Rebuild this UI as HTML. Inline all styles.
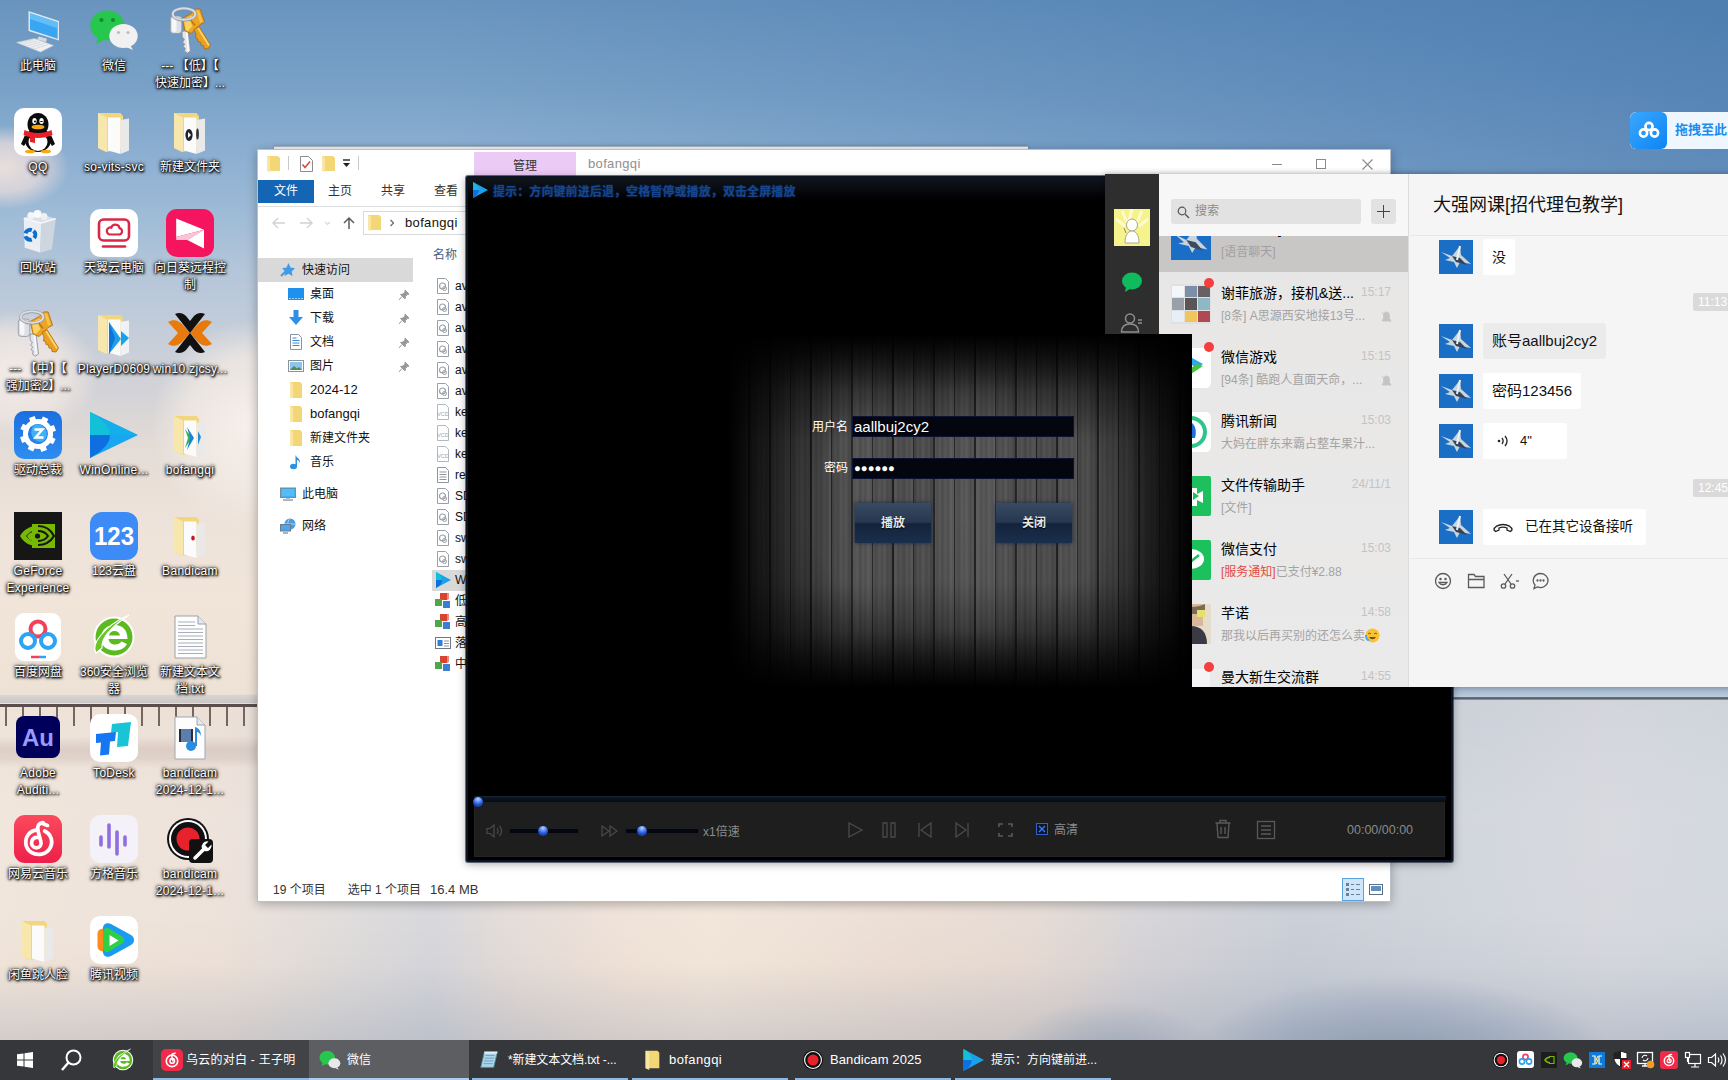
<!DOCTYPE html>
<html lang="zh-CN">
<head>
<meta charset="utf-8">
<title>桌面</title>
<style>
*{box-sizing:border-box;margin:0;padding:0}
html,body{width:1728px;height:1080px;overflow:hidden}
body{position:relative;font-family:"Liberation Sans","Noto Sans CJK SC",sans-serif;font-size:12px;color:#000;background:#e6dad3}
.abs{position:absolute}
/* ---------- wallpaper ---------- */
#wall{position:absolute;left:0;top:0;width:1728px;height:1080px;overflow:hidden;
background:linear-gradient(180deg,#6894be 0px,#7aa2c8 90px,#8baed1 150px,#9dbad6 210px,#b2c5d9 265px,#c4cdd9 330px,#d5d4d7 400px,#e4dcd6 450px,#ede2d9 510px,#f1e5da 600px,#eee2d7 694px)}
#wall div{position:absolute}
#wall .skyR{left:0;top:0;width:1728px;height:260px;background:linear-gradient(90deg,rgba(56,108,165,0) 0%,rgba(56,108,165,0) 25%,rgba(56,108,165,.55) 100%)}
#wall .c1{left:-60px;top:125px;width:130px;height:85px;background:radial-gradient(ellipse at 50% 50%,rgba(238,224,220,.95) 0,rgba(232,220,220,.75) 40%,rgba(230,220,222,0) 70%)}
#wall .c2{left:-70px;top:310px;width:170px;height:130px;background:radial-gradient(ellipse at 50% 50%,rgba(244,236,231,.97) 0,rgba(240,231,226,.75) 45%,rgba(238,229,224,0) 70%)}
#wall .c3{left:150px;top:320px;width:200px;height:210px;background:radial-gradient(ellipse at 50% 50%,rgba(247,240,235,.97) 0,rgba(242,234,228,.75) 45%,rgba(240,232,226,0) 70%)}
#wall .water{left:0;top:694px;width:1728px;height:386px;background:linear-gradient(90deg,#efe3d8 0%,#ebdfd6 13%,#dedad8 19%,#d4d4d9 25%,#e3dad5 30%,#eee0d5 36%,#f1e4d8 41%,#eadcd2 52%,#e4d8d1 60%,#d3d1d5 66%,#c6cbd4 75%,#cdd1d9 86%,#d3d5db 93%,#cfd4db 100%)}
#wall .waterv{left:0;top:694px;width:1728px;height:386px;background:linear-gradient(180deg,rgba(150,165,185,.0) 0,rgba(255,255,255,.12) 120px,rgba(255,255,255,.1) 220px,rgba(120,135,160,.0) 270px,rgba(110,128,155,.22) 346px)}
#wall .blob{left:1180px;top:975px;width:440px;height:120px;background:radial-gradient(ellipse at 50% 75%,rgba(110,130,160,.6) 0,rgba(125,143,170,.32) 45%,rgba(130,148,172,0) 70%)}
#wall .blob2{left:1000px;top:1000px;width:220px;height:80px;background:radial-gradient(ellipse at 50% 70%,rgba(120,138,165,.45) 0,rgba(130,148,172,.2) 45%,rgba(130,148,172,0) 70%)}
#wall .rail{left:0;top:695px;width:258px;height:8px;background:linear-gradient(180deg,#d9d5d4 0,#cbc6c6 100%)}
#wall .deck{left:0;top:704px;width:258px;height:3px;background:#5a4d4b}
#wall .pier{left:5px;top:707px;width:253px;height:19px;background:repeating-linear-gradient(90deg,rgba(96,80,74,.85) 0 2px,rgba(0,0,0,0) 2px 17px)}
#wall .refl{left:0;top:736px;width:258px;height:32px;background:linear-gradient(180deg,rgba(190,172,166,0),rgba(190,172,166,.38) 40%,rgba(190,172,166,.3) 70%,rgba(190,172,166,0))}
#wall .horb{left:1453px;top:687px;width:275px;height:11px;background:linear-gradient(180deg,#9fb6cf,#b4c5d7 70%,#c3cdd9)}
#wall .hor{left:1453px;top:697px;width:275px;height:3px;background:linear-gradient(180deg,#66758a,#55626f 50%,#9aa7b6)}
/* ---------- desktop icons ---------- */
.ico{position:absolute;width:76px;text-align:center;color:#fff;font-size:12px;line-height:17px}
.ico .g{position:absolute;left:14px;top:0;width:48px;height:48px}
.ico .t{position:absolute;left:-6px;width:88px;top:51px;text-shadow:0 1px 3px #000,0 0 4px rgba(0,0,0,.95),1px 1px 2px #000,0 0 2px rgba(0,0,0,.8)}
/* ---------- taskbar ---------- */
#tb{position:absolute;left:0;top:1040px;width:1728px;height:40px;background:#35373b;color:#fff;font-size:13px}
</style>
</head>
<body>
<div id="wall"><div class="skyR"></div><div class="c1"></div><div class="c2"></div><div class="c3"></div><div class="water"></div><div class="waterv"></div><div class="blob"></div><div class="blob2"></div><div class="refl"></div><div class="rail"></div><div class="deck"></div><div class="pier"></div><div class="horb"></div><div class="hor"></div></div>

<div id="icons">
<div class="ico" style="left:0px;top:7px"><svg class="g" viewBox="0 0 48 48" ><path d="M14.5 4l30.5 10v19.5L14.5 24z" fill="#dfe6ee"/><path d="M16 6.2l27.6 9v16.5L16 22.8z" fill="#39a6f2"/><path d="M16 6.2l27.6 9v6L16 12z" fill="#62bdf8"/><path d="M25 29.5l8 2.2-1 3.3-9-2.6z" fill="#d7dbe0"/><path d="M2.5 35.5l18-4 19 7-13 6.5z" fill="#eef0f3" stroke="#c3c8cf" stroke-width=".6"/><path d="M6 35.8l14.5-3.2M9 37.2l14-3.3M12.5 38.8l14-3.6M16 40.4l14-3.8M20 42l13.5-4.2" stroke="#cdd2d8" stroke-width=".7"/></svg><div class="t">此电脑</div></div>
<div class="ico" style="left:76px;top:7px"><svg class="g" viewBox="0 0 48 48" ><ellipse cx="17.3" cy="18.5" rx="17" ry="15" fill="#27c64d"/><path d="M8 30l-2 7 8-4z" fill="#27c64d"/><circle cx="11.5" cy="13" r="2" fill="#128a2e"/><circle cx="23" cy="13" r="2" fill="#128a2e"/><ellipse cx="33.5" cy="29" rx="14.2" ry="12" fill="#f1f1f1"/><path d="M40 38l3 5-7-3z" fill="#f1f1f1"/><circle cx="28.5" cy="25.5" r="1.6" fill="#bdbdbd"/><circle cx="38" cy="25.5" r="1.6" fill="#bdbdbd"/></svg><div class="t">微信</div></div>
<div class="ico" style="left:152px;top:7px"><svg class="g" viewBox="0 0 48 48" ><g><rect x="4.300" y="9" width="11.500" height="17.500" rx="3.200" fill="#dcdfe5" stroke="#8f949d" stroke-width=".800"/><rect x="6" y="10.500" width="4.500" height="14.500" rx="2" fill="#f6f7f9"/><path d="M16 24.500l6-1.500 2.500 21-3 2.200-3-2 .700-3-2.200-1.500 1.700-2.500-2-2 1.700-3-2.200-2z" fill="#e3e5ea" stroke="#878c96" stroke-width=".800"/><path d="M20.500 24l1.700 20" stroke="#fafbfc" stroke-width="1.600"/><path d="M16.200 11.500l9-5 4.500-4.600h4.400l4.500 13.300-4.500 2.300-9 9-6-2.400z" fill="#eda427" stroke="#a9690f" stroke-width=".800"/><path d="M18 12.500l7.500-4 2 4-3 2.500 2 4-4.500 5-2.500-1z" fill="#fbd35f"/><path d="M30.500 3.500h2.500l3.800 11.200-2.800 1.400z" fill="#f9c347"/><path d="M28 22.500l5-3 11.500 18.500-2.500 4-4-.500-.500-3-2.500-.500-.500-3-2.500-.500-.500-3-2-.500.500-4z" fill="#e99f22" stroke="#a9690f" stroke-width=".800"/><path d="M32 21l11 17.500" stroke="#fbd466" stroke-width="1.800"/><path d="M24 12l5 6.500" stroke="#b97a16" stroke-width="1.600"/><ellipse cx="18" cy="7.200" rx="11.300" ry="5.800" fill="none" stroke="#8d93a0" stroke-width="3"/><ellipse cx="18" cy="7" rx="11.300" ry="5.800" fill="none" stroke="#d9dce3" stroke-width="2"/></g></svg><div class="t">--- 【低】【<br>快速加密】...</div></div>
<div class="ico" style="left:0px;top:108px"><svg class="g" viewBox="0 0 48 48" ><rect x="0" y="0" width="48" height="48" rx="10" fill="#fff"/><ellipse cx="24" cy="16.5" rx="10.5" ry="11.5" fill="#0b0b0b"/><ellipse cx="24" cy="32" rx="13" ry="12" fill="#0b0b0b"/><path d="M11 27l-4 9 3 2 4-6zM37 27l4 9-3 2-4-6z" fill="#0b0b0b"/><ellipse cx="24" cy="34" rx="9.5" ry="9" fill="#fff"/><ellipse cx="20.5" cy="13" rx="2.2" ry="3" fill="#fff"/><ellipse cx="27.5" cy="13" rx="2.2" ry="3" fill="#fff"/><circle cx="21" cy="13.5" r="1" fill="#000"/><path d="M26.3 13.5h2.4" stroke="#000" stroke-width="1"/><ellipse cx="24" cy="19" rx="6.5" ry="2.3" fill="#f7a70f"/><path d="M10.5 22c8 4 19 4 27 0l1 5c-8 4-21 4-29 0z" fill="#e8202a"/><path d="M16 27h5v8l-5-1z" fill="#e8202a"/><ellipse cx="16" cy="43.5" rx="5" ry="1.8" fill="#f7a70f"/><ellipse cx="32" cy="43.5" rx="5" ry="1.8" fill="#f7a70f"/></svg><div class="t" style="letter-spacing:.3px">QQ</div></div>
<div class="ico" style="left:76px;top:108px"><svg class="g" viewBox="0 0 48 48" ><path d="M8 5h22.5l2.5 3v33l-17 3-8-4z" fill="#f1d67e"/><path d="M8 5l9 4.5v34.5l-9-4z" fill="#f8e7ad"/><path d="M18 9.5h12.5v36.5l-12.5-3.5z" fill="#fbfbfb"/><path d="M30.5 12l8.5-1.5v32l-8.5 3.5z" fill="#e9e9ea"/></svg><div class="t" style="letter-spacing:.3px">so-vits-svc</div></div>
<div class="ico" style="left:152px;top:108px"><svg class="g" viewBox="0 0 48 48" ><path d="M8 5h22.5l2.5 3v33l-17 3-8-4z" fill="#f1d67e"/><path d="M8 5l9 4.5v34.5l-9-4z" fill="#f8e7ad"/><path d="M18 9.5h12.5v36.5l-12.5-3.5z" fill="#fbfbfb"/><path d="M30.5 12l8.5-1.5v32l-8.5 3.5z" fill="#e9e9ea"/><ellipse cx="23" cy="27" rx="3.6" ry="6" fill="#22222c"/><path d="M22 24l3 3-3 3z" fill="#fff"/><ellipse cx="31.5" cy="26" rx="1.4" ry="5.5" fill="#33333c"/></svg><div class="t">新建文件夹</div></div>
<div class="ico" style="left:0px;top:209px"><svg class="g" viewBox="0 0 48 48" ><path d="M9.800 9.100L22.900 4.100L41.800 9.700L27.300 14.100z" fill="#dfe3e8" opacity=".9"/><circle cx="17" cy="6.500" r="3.600" fill="#f4f5f7"/><circle cx="23.500" cy="5" r="4" fill="#fafafb"/><circle cx="30" cy="7.500" r="3.400" fill="#eef0f3"/><path d="M9.800 9.100L27.300 14.100L26.200 44.100L10.700 39.100z" fill="#f0f2f5" opacity=".92"/><path d="M27.300 14.100L41.800 9.700L37.900 40.800L26.200 44.100z" fill="#d3d8df" opacity=".88"/><path d="M9.800 9.100L27.300 14.100L41.800 9.700" fill="none" stroke="#fbfbfc" stroke-width="1.400"/><path d="M10.700 39.100L26.200 44.100L37.900 40.800" fill="none" stroke="#b9bec6" stroke-width=".800"/><circle cx="16.300" cy="25.800" r="5" fill="none" stroke="#0b6fd2" stroke-width="4" stroke-dasharray="7.700 2.770" transform="rotate(-50 16.300 25.800)"/></svg><div class="t">回收站</div></div>
<div class="ico" style="left:76px;top:209px"><svg class="g" viewBox="0 0 48 48" ><rect width="48" height="48" rx="10" fill="#fff"/><rect x="9" y="10.5" width="30" height="21" rx="4.5" fill="none" stroke="#dc2647" stroke-width="2.6"/><path d="M13 37.5h22" stroke="#dc2647" stroke-width="2.6" stroke-linecap="round"/><path d="M19.5 25.5h9.5a3.2 3.2 0 0 0 .6-6.3 4.3 4.3 0 0 0-8.3-.6 3.5 3.5 0 0 0-1.8 6.9z" fill="none" stroke="#dc2647" stroke-width="2.2"/></svg><div class="t">天翼云电脑</div></div>
<div class="ico" style="left:152px;top:209px"><svg class="g" viewBox="0 0 48 48" ><rect width="48" height="48" rx="11" fill="#f5155e"/><path d="M10.200 9.600L38 20.700L10.200 28z" fill="#fff"/><path d="M10.200 28L38 20.700L21.300 31H10.200z" fill="#fac3d6"/><path d="M38 20.700V39.600L21.300 31z" fill="#fff"/></svg><div class="t">向日葵远程控<br>制</div></div>
<div class="ico" style="left:0px;top:310px"><svg class="g" viewBox="0 0 48 48" ><g><rect x="4.300" y="9" width="11.500" height="17.500" rx="3.200" fill="#dcdfe5" stroke="#8f949d" stroke-width=".800"/><rect x="6" y="10.500" width="4.500" height="14.500" rx="2" fill="#f6f7f9"/><path d="M16 24.500l6-1.500 2.500 21-3 2.200-3-2 .700-3-2.200-1.500 1.700-2.500-2-2 1.700-3-2.200-2z" fill="#e3e5ea" stroke="#878c96" stroke-width=".800"/><path d="M20.500 24l1.700 20" stroke="#fafbfc" stroke-width="1.600"/><path d="M16.200 11.500l9-5 4.500-4.600h4.400l4.500 13.300-4.500 2.300-9 9-6-2.400z" fill="#eda427" stroke="#a9690f" stroke-width=".800"/><path d="M18 12.500l7.500-4 2 4-3 2.500 2 4-4.500 5-2.500-1z" fill="#fbd35f"/><path d="M30.500 3.500h2.500l3.800 11.200-2.800 1.400z" fill="#f9c347"/><path d="M28 22.500l5-3 11.500 18.500-2.500 4-4-.500-.500-3-2.500-.500-.500-3-2.500-.500-.500-3-2-.500.500-4z" fill="#e99f22" stroke="#a9690f" stroke-width=".800"/><path d="M32 21l11 17.500" stroke="#fbd466" stroke-width="1.800"/><path d="M24 12l5 6.500" stroke="#b97a16" stroke-width="1.600"/><ellipse cx="18" cy="7.200" rx="11.300" ry="5.800" fill="none" stroke="#8d93a0" stroke-width="3"/><ellipse cx="18" cy="7" rx="11.300" ry="5.800" fill="none" stroke="#d9dce3" stroke-width="2"/></g></svg><div class="t">--- 【中】【<br>强加密2】...</div></div>
<div class="ico" style="left:76px;top:310px"><svg class="g" viewBox="0 0 48 48" ><path d="M8 5h22.5l2.5 3v33l-17 3-8-4z" fill="#f1d67e"/><path d="M8 5l9 4.5v34.5l-9-4z" fill="#f8e7ad"/><path d="M18 9.500h12.500v36.500l-12.500-3.500z" fill="#fbfbfb"/><path d="M30.500 12l8.500-1.500v32l-8.500 3.500z" fill="#eef1f5"/><path d="M19 12l12 17-12 15z" fill="#1ba1ea"/><path d="M19 12l6 16-6 16z" fill="#0f74d4"/><path d="M31 21l8 7-8 8z" fill="#1ba1ea"/></svg><div class="t" style="letter-spacing:.3px">PlayerD0609</div></div>
<div class="ico" style="left:152px;top:310px"><svg class="g" viewBox="0 0 48 48" ><path d="M2 12c5-3 10-2 14 2l8 9-8 9c-4 4-9 5-14 2l10-11zM46 12c-5-3-10-2-14 2l-8 9 8 9c4 4 9 5 14 2L36 23z" fill="#e8790c"/><path d="M9 4c4-2 8-1 11 2l4 5 4-5c3-3 7-4 11-2L24 23zM9 42c4 2 8 1 11-2l4-5 4 5c3 3 7 4 11 2L24 23z" fill="#111"/></svg><div class="t" style="letter-spacing:.3px">win10.zjcsy...</div></div>
<div class="ico" style="left:0px;top:411px"><svg class="g" viewBox="0 0 48 48" ><defs><linearGradient id="qd" x1="0" y1="0" x2="0" y2="1"><stop offset="0" stop-color="#1a6fe0"/><stop offset="1" stop-color="#2f8df0"/></linearGradient></defs><rect width="48" height="48" rx="10" fill="url(#qd)"/><g transform="rotate(-20 24 23)"><circle cx="24" cy="23" r="12.500" fill="none" stroke="#fff" stroke-width="5"/><g fill="#fff"><rect x="21" y="5" width="6" height="6"/><rect x="21" y="35" width="6" height="6"/><rect x="6" y="20" width="6" height="6"/><rect x="36" y="20" width="6" height="6"/><rect x="21" y="5" width="6" height="6" transform="rotate(45 24 23)"/><rect x="21" y="35" width="6" height="6" transform="rotate(45 24 23)"/><rect x="6" y="20" width="6" height="6" transform="rotate(45 24 23)"/><rect x="36" y="20" width="6" height="6" transform="rotate(45 24 23)"/></g></g><ellipse cx="25" cy="22" rx="7.500" ry="9" fill="#3fb2f5" transform="rotate(-25 25 22)"/><path d="M20.500 18.500h8l-7 8h8" fill="none" stroke="#fff" stroke-width="2.400"/></svg><div class="t">驱动总裁</div></div>
<div class="ico" style="left:76px;top:411px"><svg class="g" viewBox="0 0 48 48" ><path d="M0 1l48 23L0 47z" fill="#17a6ef"/><path d="M0 1c12 7 20 14 20 23L0 24z" fill="#12c0d8"/><path d="M0 24h20c0 9-8 16-20 23z" fill="#0d6fe0"/><path d="M20 24c0-9-8-16-20-23l48 23z" fill="#14b4ea" opacity=".6"/></svg><div class="t" style="letter-spacing:.3px">WinOnline...</div></div>
<div class="ico" style="left:152px;top:411px"><svg class="g" viewBox="0 0 48 48" ><path d="M8 5h22.5l2.5 3v33l-17 3-8-4z" fill="#f1d67e"/><path d="M8 5l9 4.5v34.5l-9-4z" fill="#f8e7ad"/><path d="M18 9.5h12.5v36.5l-12.5-3.5z" fill="#fbfbfb"/><path d="M30.5 12l8.5-1.5v32l-8.5 3.5z" fill="#e9e9ea"/><path d="M19 18l7 9-7 10 3-10z" fill="#35b54a"/><path d="M21 16l7 11-7 12 3-12z" fill="#1c84d8"/><path d="M32 20l3 6-3 8z" fill="#2a8ad8"/></svg><div class="t" style="letter-spacing:.3px">bofangqi</div></div>
<div class="ico" style="left:0px;top:512px"><svg class="g" viewBox="0 0 48 48" ><rect width="48" height="48" fill="#161616"/><rect x="18" y="12" width="23" height="24" fill="#76b900"/><path d="M6 24c4-7 10-10 18-10v4c-5 0-9 2-12 6 3 4 7 6 12 6v4c-8 0-14-3-18-10z" fill="#76b900"/><path d="M13 24c2-3 6-5 11-5v3c-3 0-5 1-6 2 1 2 3 3 6 3v3c-5 0-9-2-11-6z" fill="#76b900"/><path d="M24 14c7 0 13 4 16 10-3 5-9 9-16 9" fill="none" stroke="#161616" stroke-width="2.200"/><path d="M24 19c4 0 8 2 10 5-2 3-6 5-10 5" fill="none" stroke="#161616" stroke-width="2"/><circle cx="23.500" cy="24" r="2.600" fill="#161616"/></svg><div class="t" style="letter-spacing:.3px">GeForce<br>Experience</div></div>
<div class="ico" style="left:76px;top:512px"><svg class="g" viewBox="0 0 48 48" ><rect width="48" height="48" rx="12" fill="#3d8bf7"/><text x="24" y="33" font-family="Liberation Sans,sans-serif" font-weight="bold" font-size="25" text-anchor="middle" fill="#fff" textLength="40" lengthAdjust="spacingAndGlyphs">123</text></svg><div class="t">123云盘</div></div>
<div class="ico" style="left:152px;top:512px"><svg class="g" viewBox="0 0 48 48" ><path d="M8 5h22.5l2.5 3v33l-17 3-8-4z" fill="#f1d67e"/><path d="M8 5l9 4.5v34.5l-9-4z" fill="#f8e7ad"/><path d="M18 9.5h12.5v36.5l-12.5-3.5z" fill="#fbfbfb"/><path d="M30.5 12l8.5-1.5v32l-8.5 3.5z" fill="#e9e9ea"/><ellipse cx="27" cy="26" rx="1.800" ry="2.600" fill="#c2182b"/></svg><div class="t" style="letter-spacing:.3px">Bandicam</div></div>
<div class="ico" style="left:0px;top:613px"><svg class="g" viewBox="0 0 48 48" ><rect x="1" y="0" width="46" height="48" rx="9" fill="#fff"/><circle cx="24" cy="16" r="7.500" fill="none" stroke="#f2415a" stroke-width="4"/><circle cx="14" cy="28" r="7" fill="none" stroke="#2aa4f4" stroke-width="4"/><circle cx="34" cy="28" r="7" fill="none" stroke="#2aa4f4" stroke-width="4"/><path d="M19.500 21.500l-2 2.500M28.500 21.500l2 2.500" stroke="#2aa4f4" stroke-width="4"/><path d="M17 44h8" stroke="#f2415a" stroke-width="2.500"/><path d="M25 44h7" stroke="#2aa4f4" stroke-width="2.500"/></svg><div class="t">百度网盘</div></div>
<div class="ico" style="left:76px;top:613px"><svg class="g" viewBox="0 0 48 48" ><circle cx="24" cy="24" r="20.500" fill="#fff"/><circle cx="24" cy="24" r="18.500" fill="#5cba21"/><path d="M11 26c0-9 6-14 13.500-14 8 0 13 5 13 14h-19c.500 3.500 3 5.500 6.500 5.500 3 0 5-1 6.500-3l5.500 2.500c-2.500 4.500-7 6.500-12.500 6.500-8 0-13.500-5-13.500-11.500zm8-3.500h11c-.500-3-2.500-4.500-5.500-4.500s-5 1.500-5.500 4.500z" fill="#fff"/><path d="M6 40c-5-8 6-26 33-38-18 12-28 24-27 33z" fill="#6ac42a" stroke="#fff" stroke-width="1.200"/></svg><div class="t">360安全浏览<br>器</div></div>
<div class="ico" style="left:152px;top:613px"><svg class="g" viewBox="0 0 48 48" ><path d="M9 3h23l8 8v34H9z" fill="#fdfdfd" stroke="#9aa0a8" stroke-width="1"/><path d="M32 3v8h8" fill="#e4e7eb" stroke="#9aa0a8" stroke-width="1"/><path d="M12 9h17M12 12.500h17M12 16h25M12 19.500h25M12 23h25M12 26.500h25M12 30h25M12 33.500h25M12 37h25M12 40.500h25" stroke="#a9afb8" stroke-width="1"/></svg><div class="t">新建文本文<br>档.txt</div></div>
<div class="ico" style="left:0px;top:714px"><svg class="g" viewBox="0 0 48 48" ><rect x="2" y="2" width="44" height="42" rx="8" fill="#00005b"/><text x="24" y="32" font-family="Liberation Sans,sans-serif" font-weight="bold" font-size="24" text-anchor="middle" fill="#9999ff">Au</text></svg><div class="t" style="letter-spacing:.3px">Adobe<br>Auditi...</div></div>
<div class="ico" style="left:76px;top:714px"><svg class="g" viewBox="0 0 48 48" ><rect width="48" height="48" rx="10" fill="#fff"/><path d="M22 10l19-2-3 24-11 1 1-15-7 1z" fill="#1bc3d6"/><path d="M6 20l20-2-1 9-5 .500-1 13-9 1 1-13-5 .500z" fill="#1677f2"/></svg><div class="t" style="letter-spacing:.3px">ToDesk</div></div>
<div class="ico" style="left:152px;top:714px"><svg class="g" viewBox="0 0 48 48" ><path d="M9 3h22l8 8v34H9z" fill="#fdfdfd" stroke="#a0a6ae" stroke-width="1"/><path d="M31 3v8h8" fill="#e4e7eb" stroke="#a0a6ae" stroke-width="1"/><rect x="13" y="15" width="14" height="13" fill="#5a7fae"/><rect x="13" y="15" width="2" height="13" fill="#2c2c34"/><rect x="25" y="15" width="2" height="13" fill="#2c2c34"/><circle cx="25" cy="32" r="5" fill="#2b8be0"/><path d="M29 32V13c4 1 6 4 6 9-1-3-3-4-4-4v14z" fill="#2b8be0"/></svg><div class="t" style="letter-spacing:.3px">bandicam<br>2024-12-1...</div></div>
<div class="ico" style="left:0px;top:815px"><svg class="g" viewBox="0 0 48 48" ><defs><linearGradient id="wy" x1="0" y1="0" x2="0" y2="1"><stop offset="0" stop-color="#fb4a5c"/><stop offset="1" stop-color="#ee1f4a"/></linearGradient></defs><rect width="48" height="48" rx="11" fill="url(#wy)"/><g transform="translate(24 25) scale(1.12) translate(-24.500 -24.500)"><path d="M30.500 16.500c6 3 8 10 4.500 15.500s-11 7-16.500 3.500-6.500-11-2.500-16c2.200-2.800 5.500-4 8.500-3.800" fill="none" stroke="#fff" stroke-width="3.400" stroke-linecap="round"/><path d="M29 9c-4.500.500-5.500 4-4.500 7.500l2.500 9c1 3.500-1 6-4 6s-5-3-4-6c.800-2.400 3-3.600 5.500-3.300" fill="none" stroke="#fff" stroke-width="3.300" stroke-linecap="round"/><path d="M28 9.500l5 2" stroke="#fff" stroke-width="3.300" stroke-linecap="round"/></g></svg><div class="t">网易云音乐</div></div>
<div class="ico" style="left:76px;top:815px"><svg class="g" viewBox="0 0 48 48" ><rect width="48" height="48" rx="10" fill="#f4f2f8"/><g stroke="#8f6fe0" stroke-width="3.600" stroke-linecap="round"><path d="M11 22v8M19 10v22M27 17v22M35 22v8"/></g></svg><div class="t">方格音乐</div></div>
<div class="ico" style="left:152px;top:815px"><svg class="g" viewBox="0 0 48 48" ><circle cx="22" cy="24" r="21" fill="#111" /><circle cx="22" cy="24" r="19" fill="#fff"/><circle cx="22" cy="24" r="17" fill="#111"/><circle cx="22" cy="24" r="11.500" fill="#e8222c"/><rect x="23" y="24" width="24" height="24" rx="4" fill="#111"/><path d="M27.500 42l8.500-8.500a5.500 5.500 0 0 1 6.500-7l-3.500 3.500 3 3 3.500-3.500a5.500 5.500 0 0 1-7 6.500L30 44.500a1.800 1.800 0 0 1-2.500-2.500z" fill="#fff"/></svg><div class="t" style="letter-spacing:.3px">bandicam<br>2024-12-1...</div></div>
<div class="ico" style="left:0px;top:916px"><svg class="g" viewBox="0 0 48 48" ><path d="M8 5h22.5l2.5 3v33l-17 3-8-4z" fill="#f1d67e"/><path d="M8 5l9 4.5v34.5l-9-4z" fill="#f8e7ad"/><path d="M18 9.5h12.5v36.5l-12.5-3.5z" fill="#fbfbfb"/><path d="M30.5 12l8.5-1.5v32l-8.5 3.5z" fill="#e9e9ea"/></svg><div class="t">闲鱼跳人脸</div></div>
<div class="ico" style="left:76px;top:916px"><svg class="g" viewBox="0 0 48 48" ><rect width="48" height="48" rx="10" fill="#fff"/><path d="M7.500 17.500c0-3 2-4.500 6-5v23c-4-.500-6-2-6-5z" fill="#ff8a1d"/><path d="M13 12c0-4 4-6 8-4l20 11c4 2 4 8 0 10L21 40c-4 2-8 0-8-4z" fill="#1a9bf2"/><path d="M13 16c0-3 3-5 6-3.500l13 8c3 2 3 5 0 7l-13 8c-3 1.500-6-.500-6-3.500z" fill="#2fcf45"/><path d="M19.500 19l9 5.500-9 5.500z" fill="#fff"/></svg><div class="t">腾讯视频</div></div>
</div>
<style>
#bgwin{position:absolute;left:274px;top:146px;width:754px;height:6px;background:#f3f4f6;border-top:1px solid #aab4c0;box-shadow:0 0 3px rgba(0,0,0,.25)}
#ex{position:absolute;left:257px;top:149px;width:1134px;height:753px;background:#fff;border:1px solid #b9c0c8;box-shadow:0 2px 10px rgba(0,0,0,.28);font-size:12px;color:#222}
#ex .a{position:absolute}
#ex .tabs span{position:absolute;top:30px;height:23px;line-height:23px;text-align:center;font-size:12px;color:#333}
#ex .nav{position:absolute;left:0;font-size:12px;line-height:16px;color:#111;white-space:nowrap}
#ex .nav svg{position:absolute;left:-22px;top:0;width:16px;height:16px}
#ex .pin{position:absolute;left:140px;width:12px;height:12px}
#ex .row{position:absolute;left:174px;height:21px;width:40px;white-space:nowrap;overflow:hidden;font-size:12px;line-height:20px;color:#111}
#ex .row svg{position:absolute;left:3px;top:2px;width:16px;height:16px}
#ex .row b{position:absolute;left:23px;font-weight:normal}
</style>
<div id="bgwin"></div>
<div id="ex">
 <!-- quick access toolbar -->
 <svg class="a" style="left:8px;top:5px" width="16" height="18" viewBox="0 0 16 18"><path d="M1 1h11l2 2v13H1z" fill="#f3d675"/><path d="M1 1l3 1.500v14.500l-3-1z" fill="#f9e6a4"/></svg>
 <div class="a" style="left:30px;top:6px;width:1px;height:14px;background:#c9c9c9"></div>
 <svg class="a" style="left:41px;top:5px" width="15" height="18" viewBox="0 0 15 18"><path d="M1.500 1.500h8l4 4v11h-12z" fill="#fff" stroke="#8c8c8c"/><path d="M3.500 9.500l2.500 3 5-6" fill="none" stroke="#e04a3a" stroke-width="1.600"/></svg>
 <svg class="a" style="left:63px;top:5px" width="16" height="18" viewBox="0 0 16 18"><path d="M1 1h11l2 2v13H1z" fill="#f3d675"/><path d="M1 1l3 1.500v14.500l-3-1z" fill="#f9e6a4"/></svg>
 <svg class="a" style="left:84px;top:9px" width="9" height="9" viewBox="0 0 9 9"><path d="M1 1h7" stroke="#222" stroke-width="1.400"/><path d="M1 4h7l-3.500 4z" fill="#222"/></svg>
 <div class="a" style="left:100px;top:6px;width:1px;height:14px;background:#c9c9c9"></div>
 <!-- manage tab + title -->
 <div class="a" style="left:216px;top:2px;width:102px;height:25px;background:#ebcbf6;text-align:center;line-height:28px;font-size:12px;color:#333">管理</div>
 <div class="a" style="left:330px;top:5px;font-size:13px;line-height:17px;letter-spacing:.35px;color:#8f8f8f">bofangqi</div>
 <!-- window controls -->
 <svg class="a" style="left:1012px;top:6px" width="110" height="16" viewBox="0 0 110 16"><path d="M2 8.500h10" stroke="#8a8a8a"/><rect x="46.500" y="3.500" width="9" height="9" fill="none" stroke="#8a8a8a"/><path d="M92.500 3.500l10 10M102.500 3.500l-10 10" stroke="#8a8a8a" stroke-width="1.100"/></svg>
 <!-- ribbon tabs -->
 <div class="tabs">
  <span style="left:0;width:56px;background:#1565b5;color:#fff">文件</span>
  <span style="left:62px;width:40px">主页</span>
  <span style="left:115px;width:40px">共享</span>
  <span style="left:168px;width:40px">查看</span>
 </div>
 <div class="a" style="left:0;top:56px;width:1131px;height:1px;background:#dcdddf"></div>
 <!-- address row -->
 <svg class="a" style="left:12px;top:64px" width="90" height="18" viewBox="0 0 90 18"><g fill="none" stroke="#d2d2d2" stroke-width="1.400"><path d="M15 9H3M8 4L3 9l5 5"/><path d="M30 9h12M37 4l5 5-5 5"/></g><path d="M55 8l2.500 2.500L60 8" fill="none" stroke="#dadada" stroke-width="1.200"/><path d="M79 15V4M74 9l5-5 5 5" fill="none" stroke="#5c5c5c" stroke-width="1.500"/></svg>
 <div class="a" style="left:105px;top:61px;width:1000px;height:24px;border:1px solid #d9d9d9;background:#fff"></div>
 <svg class="a" style="left:109px;top:64px" width="16" height="18" viewBox="0 0 16 18"><path d="M1 1h11l2 2v13H1z" fill="#f3d675"/><path d="M1 1l3 1.500v14.500l-3-1z" fill="#f9e6a4"/></svg>
 <svg class="a" style="left:130px;top:68px" width="8" height="10" viewBox="0 0 8 10"><path d="M2.500 2l3 3-3 3" fill="none" stroke="#666" stroke-width="1.200"/></svg>
 <div class="a" style="left:147px;top:64px;font-size:13px;line-height:17px;letter-spacing:.35px;color:#111">bofangqi</div>
 <!-- nav pane -->
 <div class="a" style="left:0;top:108px;width:155px;height:24px;background:#d9d9d9"></div>
 <div class="nav" style="left:44px;top:112px"><svg viewBox="0 0 16 16"><path d="M8.500 1l2 4.500 4.500.700-3.300 3.200.800 4.600-4-2.200-4 2.200.800-4.600L2 6.200l4.500-.700z" fill="#3d9bea"/><path d="M1 14l5-5" stroke="#3d9bea" stroke-width="2"/></svg>快速访问</div>
 <div class="nav" style="left:52px;top:136px"><svg viewBox="0 0 16 16"><rect x="0" y="2" width="16" height="12" fill="#1e90ee"/><path d="M1 12.500h14" stroke="#9fd0fa" stroke-width="1" stroke-dasharray="2 1"/></svg>桌面</div>
 <div class="nav" style="left:52px;top:160px"><svg viewBox="0 0 16 16"><path d="M5.500 0h5v7h4.500L8 15 1 7h4.500z" fill="#2d8fe6"/></svg>下载</div>
 <div class="nav" style="left:52px;top:184px"><svg viewBox="0 0 16 16"><path d="M2.500.5h8l3 3v12h-11z" fill="#fff" stroke="#8a929c"/><path d="M4.500 4h4M4.500 6.500h7M4.500 9h7M4.500 11.500h7" stroke="#3a8ad8" stroke-width="1.200"/></svg>文档</div>
 <div class="nav" style="left:52px;top:208px"><svg viewBox="0 0 16 16"><rect x=".5" y="2.500" width="15" height="11" fill="#fff" stroke="#8a929c"/><rect x="2" y="4" width="12" height="8" fill="#8ec3ee"/><path d="M2 12l4-4 3 2.500 2-1.500 3 3z" fill="#4f8a5c"/></svg>图片</div>
 <div class="nav" style="left:52px;top:232px;font-size:13px"><svg viewBox="0 0 16 16"><path d="M2 0h10l2 2v14H2z" fill="#f3d675"/><path d="M2 0l3 1.500v14.500H2z" fill="#f9e6a4"/></svg>2024-12</div>
 <div class="nav" style="left:52px;top:256px;font-size:13px"><svg viewBox="0 0 16 16"><path d="M2 0h10l2 2v14H2z" fill="#f3d675"/><path d="M2 0l3 1.500v14.500H2z" fill="#f9e6a4"/></svg>bofangqi</div>
 <div class="nav" style="left:52px;top:280px"><svg viewBox="0 0 16 16"><path d="M2 0h10l2 2v14H2z" fill="#f3d675"/><path d="M2 0l3 1.500v14.500H2z" fill="#f9e6a4"/></svg>新建文件夹</div>
 <div class="nav" style="left:52px;top:304px"><svg viewBox="0 0 16 16"><ellipse cx="5.500" cy="12.500" rx="3.500" ry="2.800" fill="#2d8fe6"/><path d="M7.500 12.500V1c1 3 5 3.500 4.500 8-1-2.500-2.500-3-3-3v6.500z" fill="#2d8fe6"/></svg>音乐</div>
 <svg class="pin" style="top:139px" viewBox="0 0 12 12"><path d="M7 1l4 4-1.500.5-2 2-.5 2.500-4.500-4.500 2.500-.5 2-2zM1 11l3-3.500" fill="#9a9a9a" stroke="#9a9a9a"/></svg>
 <svg class="pin" style="top:163px" viewBox="0 0 12 12"><path d="M7 1l4 4-1.500.5-2 2-.5 2.500-4.500-4.500 2.500-.5 2-2zM1 11l3-3.500" fill="#9a9a9a" stroke="#9a9a9a"/></svg>
 <svg class="pin" style="top:187px" viewBox="0 0 12 12"><path d="M7 1l4 4-1.500.5-2 2-.5 2.500-4.500-4.500 2.500-.5 2-2zM1 11l3-3.500" fill="#9a9a9a" stroke="#9a9a9a"/></svg>
 <svg class="pin" style="top:211px" viewBox="0 0 12 12"><path d="M7 1l4 4-1.500.5-2 2-.5 2.500-4.500-4.500 2.500-.5 2-2zM1 11l3-3.500" fill="#9a9a9a" stroke="#9a9a9a"/></svg>
 <div class="nav" style="left:44px;top:336px"><svg viewBox="0 0 16 16"><rect x=".5" y="2" width="15" height="9.500" fill="#3aa3ee" stroke="#7d8a98"/><rect x="1.500" y="3" width="13" height="7.500" fill="#55bdf6"/><path d="M3 14h10" stroke="#8a96a3" stroke-width="1.400"/><path d="M6 12h4v2H6z" fill="#b8c0c9"/></svg>此电脑</div>
 <div class="nav" style="left:44px;top:368px"><svg viewBox="0 0 16 16"><circle cx="10" cy="6" r="5.500" fill="#4a9be0"/><path d="M5 6h10M10 .5c-3 3-3 8 0 11" stroke="#a8d2f5" fill="none"/><rect x=".5" y="6.500" width="10" height="6.500" fill="#49a7ee" stroke="#6b7b8c"/><path d="M3 15h5" stroke="#7d8a98" stroke-width="1.300"/></svg>网络</div>
 <!-- column header -->
 <div class="a" style="left:175px;top:97px;font-size:12px;line-height:16px;color:#4c607a">名称</div>
 <div class="row" style="top:126px"><svg viewBox="0 0 16 16"><path d="M2.500.5h8l3 3v12h-11z" fill="#fff" stroke="#9aa0a8"/><circle cx="7.500" cy="8" r="3" fill="none" stroke="#9aa0a8" stroke-width="1.200"/><circle cx="9.500" cy="10.500" r="2" fill="none" stroke="#9aa0a8"/></svg><b>av</b></div>
 <div class="row" style="top:147px"><svg viewBox="0 0 16 16"><path d="M2.500.5h8l3 3v12h-11z" fill="#fff" stroke="#9aa0a8"/><circle cx="7.500" cy="8" r="3" fill="none" stroke="#9aa0a8" stroke-width="1.200"/><circle cx="9.500" cy="10.500" r="2" fill="none" stroke="#9aa0a8"/></svg><b>av</b></div>
 <div class="row" style="top:168px"><svg viewBox="0 0 16 16"><path d="M2.500.5h8l3 3v12h-11z" fill="#fff" stroke="#9aa0a8"/><circle cx="7.500" cy="8" r="3" fill="none" stroke="#9aa0a8" stroke-width="1.200"/><circle cx="9.500" cy="10.500" r="2" fill="none" stroke="#9aa0a8"/></svg><b>av</b></div>
 <div class="row" style="top:189px"><svg viewBox="0 0 16 16"><path d="M2.500.5h8l3 3v12h-11z" fill="#fff" stroke="#9aa0a8"/><circle cx="7.500" cy="8" r="3" fill="none" stroke="#9aa0a8" stroke-width="1.200"/><circle cx="9.500" cy="10.500" r="2" fill="none" stroke="#9aa0a8"/></svg><b>av</b></div>
 <div class="row" style="top:210px"><svg viewBox="0 0 16 16"><path d="M2.500.5h8l3 3v12h-11z" fill="#fff" stroke="#9aa0a8"/><circle cx="7.500" cy="8" r="3" fill="none" stroke="#9aa0a8" stroke-width="1.200"/><circle cx="9.500" cy="10.500" r="2" fill="none" stroke="#9aa0a8"/></svg><b>av</b></div>
 <div class="row" style="top:231px"><svg viewBox="0 0 16 16"><path d="M2.500.5h8l3 3v12h-11z" fill="#fff" stroke="#9aa0a8"/><circle cx="7.500" cy="8" r="3" fill="none" stroke="#9aa0a8" stroke-width="1.200"/><circle cx="9.500" cy="10.500" r="2" fill="none" stroke="#9aa0a8"/></svg><b>av</b></div>
 <div class="row" style="top:252px"><svg viewBox="0 0 16 16"><path d="M2.500.5h8l3 3v12h-11z" fill="#fff" stroke="#b3b8bf"/><text x="8" y="11.500" font-size="5.500" text-anchor="middle" fill="#a0a6ae" font-family="Liberation Sans,sans-serif">VCD</text></svg><b>ke</b></div>
 <div class="row" style="top:273px"><svg viewBox="0 0 16 16"><path d="M2.500.5h8l3 3v12h-11z" fill="#fff" stroke="#b3b8bf"/><text x="8" y="11.500" font-size="5.500" text-anchor="middle" fill="#a0a6ae" font-family="Liberation Sans,sans-serif">VCD</text></svg><b>ke</b></div>
 <div class="row" style="top:294px"><svg viewBox="0 0 16 16"><path d="M2.500.5h8l3 3v12h-11z" fill="#fff" stroke="#b3b8bf"/><text x="8" y="11.500" font-size="5.500" text-anchor="middle" fill="#a0a6ae" font-family="Liberation Sans,sans-serif">VCD</text></svg><b>ke</b></div>
 <div class="row" style="top:315px"><svg viewBox="0 0 16 16"><path d="M2.500.5h8l3 3v12h-11z" fill="#fff" stroke="#8f959d"/><path d="M4.500 5h7M4.500 7.500h7M4.500 10h7M4.500 12.500h7" stroke="#8f959d"/></svg><b>re</b></div>
 <div class="row" style="top:336px"><svg viewBox="0 0 16 16"><path d="M2.500.5h8l3 3v12h-11z" fill="#fff" stroke="#9aa0a8"/><circle cx="7.500" cy="8" r="3" fill="none" stroke="#9aa0a8" stroke-width="1.200"/><circle cx="9.500" cy="10.500" r="2" fill="none" stroke="#9aa0a8"/></svg><b>SD</b></div>
 <div class="row" style="top:357px"><svg viewBox="0 0 16 16"><path d="M2.500.5h8l3 3v12h-11z" fill="#fff" stroke="#9aa0a8"/><circle cx="7.500" cy="8" r="3" fill="none" stroke="#9aa0a8" stroke-width="1.200"/><circle cx="9.500" cy="10.500" r="2" fill="none" stroke="#9aa0a8"/></svg><b>SD</b></div>
 <div class="row" style="top:378px"><svg viewBox="0 0 16 16"><path d="M2.500.5h8l3 3v12h-11z" fill="#fff" stroke="#9aa0a8"/><circle cx="7.500" cy="8" r="3" fill="none" stroke="#9aa0a8" stroke-width="1.200"/><circle cx="9.500" cy="10.500" r="2" fill="none" stroke="#9aa0a8"/></svg><b>sw</b></div>
 <div class="row" style="top:399px"><svg viewBox="0 0 16 16"><path d="M2.500.5h8l3 3v12h-11z" fill="#fff" stroke="#9aa0a8"/><circle cx="7.500" cy="8" r="3" fill="none" stroke="#9aa0a8" stroke-width="1.200"/><circle cx="9.500" cy="10.500" r="2" fill="none" stroke="#9aa0a8"/></svg><b>sw</b></div>
 <div class="row" style="top:420px;background:#d9d9d9"><svg viewBox="0 0 16 16"><path d="M1 0l15 8L1 16z" fill="#1ba1ea"/><path d="M1 8h6c0 3-2 6-6 8z" fill="#0d6fe0"/><path d="M1 0c4 2 6 5 6 8H1z" fill="#12c0d8"/></svg><b>W</b></div>
 <div class="row" style="top:441px"><svg viewBox="0 0 16 16"><rect x="5" y="0" width="7" height="7" fill="#d9432f"/><rect x="0" y="6" width="7" height="7" fill="#4ea64b"/><rect x="8" y="8" width="7" height="7" fill="#3b7fd0"/><path d="M5 0l2-1h7l-2 1zM12 0l2-1v7l-2 1z" fill="#f08a7c"/></svg><b>低</b></div>
 <div class="row" style="top:462px"><svg viewBox="0 0 16 16"><rect x="5" y="0" width="7" height="7" fill="#d9432f"/><rect x="0" y="6" width="7" height="7" fill="#4ea64b"/><rect x="8" y="8" width="7" height="7" fill="#3b7fd0"/><path d="M5 0l2-1h7l-2 1zM12 0l2-1v7l-2 1z" fill="#f08a7c"/></svg><b>高</b></div>
 <div class="row" style="top:483px"><svg viewBox="0 0 16 16"><rect x=".5" y="2.500" width="15" height="11" fill="#fff" stroke="#6d7884"/><rect x="2.500" y="5" width="5" height="6" fill="#2d7fd8"/><path d="M9 6h5M9 8.500h5M9 11h5" stroke="#8f959d"/></svg><b>落</b></div>
 <div class="row" style="top:504px"><svg viewBox="0 0 16 16"><rect x="5" y="0" width="7" height="7" fill="#d9432f"/><rect x="0" y="6" width="7" height="7" fill="#4ea64b"/><rect x="8" y="8" width="7" height="7" fill="#3b7fd0"/><path d="M5 0l2-1h7l-2 1zM12 0l2-1v7l-2 1z" fill="#f08a7c"/></svg><b>中</b></div>
 <!-- status bar -->
 <div class="a" style="left:15px;top:732px;font-size:12px;line-height:16px;color:#333;white-space:nowrap">19 个项目<span style="margin-left:22px">选中 1 个项目</span><span style="margin-left:9px;font-size:13px">16.4 MB</span></div>
 <svg class="a" style="left:1084px;top:728px" width="46" height="23" viewBox="0 0 46 23"><rect x=".5" y=".5" width="21" height="22" fill="#cfe6fa" stroke="#5aa2e0"/><g fill="#6b7f95"><rect x="4" y="5" width="3" height="3"/><rect x="4" y="10" width="3" height="3"/><rect x="4" y="15" width="3" height="3"/><rect x="9" y="6" width="3" height="1"/><rect x="9" y="11" width="3" height="1"/><rect x="9" y="16" width="3" height="1"/><rect x="14" y="6" width="4" height="1"/><rect x="14" y="11" width="4" height="1"/><rect x="14" y="16" width="4" height="1"/></g><rect x="27.500" y="6.500" width="13" height="10" fill="#fff" stroke="#5d6e80"/><rect x="29" y="8" width="10" height="5" fill="#5f8fbf"/></svg>
</div>
<style>
#pl{position:absolute;left:466px;top:176px;width:987px;height:686px;background:#000;border:2px solid #0c1424;border-radius:2px;box-shadow:0 0 0 1px rgba(20,30,50,.6),0 2px 8px rgba(0,0,0,.35)}
#pl .a{position:absolute}
#pl .bar{position:absolute;left:6px;top:622px;width:971px;height:57px;background:#1e1e1e;border:1px solid #242424}
</style>
<div id="pl">
 <div class="a" style="left:0;top:0;width:983px;height:22px;background:linear-gradient(180deg,#10151d,#000)"></div>
 <svg class="a" style="left:4px;top:3px" width="17" height="18" viewBox="0 0 17 18"><path d="M1 1l15 8L1 17z" fill="#1ba1ea"/><path d="M1 9h6c0 3-2 6-6 8z" fill="#0d6fe0"/><path d="M1 1c4 2 6 5 6 8H1z" fill="#16b8e0"/></svg>
 <div class="a" style="left:25px;top:4.5px;font-size:12px;line-height:18px;font-weight:bold;color:#16468f;white-space:nowrap;letter-spacing:.1px;text-shadow:0 0 2px rgba(26,86,176,.6)">提示：方向键前进后退，空格暂停或播放，双击全屏播放</div>
 <!-- progress -->
 
 
 <div class="bar"></div>
 <div class="a" style="left:6px;top:618px;width:972px;height:6px;background:linear-gradient(180deg,#1a2535 0,#0a1422 35%,#060c16 100%)"></div>
 <div class="a" style="left:5px;top:618.5px;width:10px;height:10px;border-radius:50%;background:radial-gradient(circle at 50% 22%,#b9d2ff 0,#5f8ff0 30%,#1f4fd0 60%,#12308c 100%)"></div>
 <!-- controls -->
 <svg class="a" style="left:17px;top:644px" width="20" height="18" viewBox="0 0 20 18"><path d="M2 6.500h3l4-3.500v12l-4-3.500H2z" fill="none" stroke="#4a4a4a" stroke-width="1.200"/><path d="M12 6c1.500 2 1.500 4 0 6M14.500 4c2.500 3 2.500 7 0 10" fill="none" stroke="#4a4a4a" stroke-width="1.200"/></svg>
 <div class="a" style="left:42px;top:651px;width:68px;height:4px;background:#04070d;box-shadow:0 0 2px #14233c"></div>
 <div class="a" style="left:70px;top:648px;width:10px;height:10px;border-radius:50%;background:radial-gradient(circle at 50% 22%,#b9d2ff 0,#5f8ff0 30%,#1f4fd0 60%,#12308c 100%)"></div>
 <svg class="a" style="left:132px;top:646px" width="20" height="14" viewBox="0 0 20 14"><path d="M2 2l7 5-7 5zM10 2l7 5-7 5z" fill="none" stroke="#4a4a4a" stroke-width="1.200"/></svg>
 <div class="a" style="left:158px;top:651px;width:72px;height:4px;background:#04070d;box-shadow:0 0 2px #14233c"></div>
 <div class="a" style="left:169px;top:648px;width:10px;height:10px;border-radius:50%;background:radial-gradient(circle at 50% 22%,#b9d2ff 0,#5f8ff0 30%,#1f4fd0 60%,#12308c 100%)"></div>
 <div class="a" style="left:235px;top:646px;font-size:12px;line-height:16px;color:#8c8c8c;white-space:nowrap">x1倍速</div>
 <svg class="a" style="left:376px;top:642px" width="180" height="20" viewBox="0 0 180 20"><g fill="none" stroke="#4b4b4b" stroke-width="1.300"><path d="M5 3l13 7-13 7z"/><path d="M39 3h4v14h-4zM47 3h4v14h-4z"/><path d="M75 3v14M77 10l10-7v14z"/><path d="M124 3v14M122 10l-10-7v14z"/><path d="M155 7V4h4M168 7V4h-4M155 13v3h4M168 13v3h-4" stroke="#5a5a5a" stroke-width="1.600"/></g></svg>
 <div class="a" style="left:568px;top:645px;width:12px;height:12px;border:1px solid #2d64c8;background:#0d1626"></div>
 <svg class="a" style="left:570px;top:647px" width="8" height="8" viewBox="0 0 8 8"><path d="M1 1l6 6M7 1L1 7" stroke="#3c7cf0" stroke-width="1.400"/></svg>
 <div class="a" style="left:586px;top:644px;font-size:12px;line-height:16px;color:#8c8c8c">高清</div>
 <svg class="a" style="left:745px;top:640px" width="20" height="22" viewBox="0 0 20 22"><g fill="none" stroke="#5a5a5a" stroke-width="1.400"><path d="M2.500 5h15M7 5V2.500h6V5M4 5.500l1 14h10l1-14M8 9v7M12 9v7"/></g></svg>
 <svg class="a" style="left:788px;top:642px" width="20" height="20" viewBox="0 0 20 20"><g fill="none" stroke="#5a5a5a" stroke-width="1.300"><rect x="1.500" y="1.500" width="17" height="17"/><path d="M5 6h10M5 10h10M5 14h10"/></g></svg>
 <div class="a" style="left:879px;top:644px;font-size:12.500px;line-height:16px;color:#8a8a8a;white-space:nowrap">00:00/00:00</div>
</div>
<style>
#wx{position:absolute;left:1105px;top:174px;width:640px;height:513px;background:#f5f5f5;box-shadow:0 0 6px rgba(0,0,0,.3);overflow:hidden}
#wx .a{position:absolute}
#wx .side{position:absolute;left:0;top:0;width:54px;height:513px;background:#2e2e2e}
#wx .list{position:absolute;left:54px;top:0;width:250px;height:513px;background:linear-gradient(180deg,#e7e6e5 0,#ebeaea 100%);border-right:1px solid #dcdcdc}
#wx .it{position:absolute;left:0;width:249px;height:64px}
#wx .it .av{position:absolute;left:12px;top:12px;width:40px;height:40px;border-radius:2px;overflow:hidden}
#wx .it .n{position:absolute;left:62px;top:11px;font-size:14px;line-height:20px;color:#000;white-space:nowrap}
#wx .it .p{position:absolute;left:62px;top:36px;font-size:12px;line-height:16px;color:#a3a3a3;white-space:nowrap}
#wx .it .tm{position:absolute;right:17px;top:12px;font-size:12px;line-height:16px;color:#c3c3c3}
#wx .it .dot{position:absolute;left:45px;top:6px;width:10px;height:10px;border-radius:50%;background:#f43f3f}
#wx .it .mu{position:absolute;left:222px;top:39px;width:11px;height:12px}
#wx .msg{position:absolute;left:334px;width:34px;height:34px;background:#1b6ec6;overflow:hidden}
#wx .bub{position:absolute;left:378px;height:36px;border-radius:3px;background:#fff;font-size:14px;line-height:36px;padding:0 9px;color:#111;white-space:nowrap}
#wx .tl{position:absolute;left:588px;width:60px;height:18px;background:#dadada;color:#fff;font-size:12px;line-height:18px;padding-left:5px;border-radius:2px}
</style>
<div id="wx">
 <div class="side">
  <div class="a" style="left:9px;top:35px;width:36px;height:37px;background:#f6f38c;overflow:hidden"><svg width="36" height="37" viewBox="0 0 36 37"><path d="M18 0l-3 12M8 2l5 11M28 2l-5 11M2 10l9 7M34 10l-9 7" stroke="#fdfbd0" stroke-width="3"/><ellipse cx="18" cy="16" rx="5.500" ry="6" fill="#fff" stroke="#8a8a6a" stroke-width=".700"/><path d="M11 34c0-8 3-12 7-12s7 4 7 12z" fill="#fff" stroke="#8a8a6a" stroke-width=".700"/><path d="M12 24l-2-5" stroke="#8a8a6a"/></svg></div>
  <svg class="a" style="left:16px;top:98px" width="22" height="21" viewBox="0 0 22 21"><ellipse cx="11" cy="9" rx="10" ry="8.500" fill="#0fbc5d"/><path d="M5 15l-1 5 5-3z" fill="#0fbc5d"/></svg>
  <svg class="a" style="left:15px;top:138px" width="24" height="22" viewBox="0 0 24 22"><g fill="none" stroke="#8e8e8e" stroke-width="1.500"><circle cx="10" cy="6.500" r="4.500"/><path d="M1.500 20c0-5 3-8 8.500-8s8.500 3 8.500 8z"/><path d="M18 8h4M18 11h4"/></g></svg>
 </div>
 <div class="list">
  <div class="a" style="left:0;top:0;width:249px;height:62px;background:#f7f7f7"></div>
  <div class="a" style="left:12px;top:25px;width:190px;height:25px;background:#e2e2e2;border-radius:3px"></div>
  <svg class="a" style="left:18px;top:32px" width="13" height="13" viewBox="0 0 13 13"><circle cx="5" cy="5" r="3.800" fill="none" stroke="#555" stroke-width="1.200"/><path d="M8 8l4 4" stroke="#555" stroke-width="1.400"/></svg>
  <div class="a" style="left:36px;top:29px;font-size:12px;line-height:17px;color:#8c8c8c">搜索</div>
  <div class="a" style="left:212px;top:25px;width:25px;height:25px;background:#e2e2e2;border-radius:3px"></div>
  <svg class="a" style="left:218px;top:31px" width="13" height="13" viewBox="0 0 13 13"><path d="M6.500 0v13M0 6.500h13" stroke="#444" stroke-width="1"/></svg>
  <!-- selected partially visible row -->
  <div class="a" style="left:0;top:62px;width:249px;height:36px;background:#c8c7c6"></div>
  <div class="a" style="left:12px;top:62px;width:40px;height:24px;background:#1b6ec6;overflow:hidden"><svg width="40" height="40" viewBox="0 0 34 34" style="position:absolute;top:-16px"><path d="M3 12l10 5 8-10 1 9 9 9-10-2-3 5-3-6-9-2 5-1z" fill="#c8d4dc"/><path d="M13 17l8 2 6 7-10-3z" fill="#3b4a5c"/></svg></div>
  <div class="a" style="left:62px;top:62px;width:130px;height:2px;overflow:hidden"><div style="margin-top:-16.5px;font-size:14px;line-height:18px;color:#000;white-space:nowrap">大强网课[招代...</div></div>
  <div class="a" style="left:62px;top:70px;font-size:12px;line-height:16px;color:#a0a0a0">[语音聊天]</div>

  <div class="it" style="top:98px"><div class="av" style="background:#dfe0e2"><svg width="40" height="40" viewBox="0 0 40 40"><g><rect x="1" y="2" width="12" height="11" fill="#f4f6fa"/><rect x="14" y="2" width="12" height="11" fill="#7c8ea8"/><rect x="27" y="2" width="12" height="11" fill="#6a6064"/><rect x="1" y="14" width="12" height="12" fill="#9aa0aa"/><rect x="14" y="14" width="12" height="12" fill="#5b5556"/><rect x="27" y="14" width="12" height="12" fill="#8eb8c6"/><rect x="1" y="27" width="12" height="11" fill="#e8eef8"/><rect x="14" y="27" width="12" height="11" fill="#f0c65a"/><rect x="27" y="27" width="12" height="11" fill="#b04a52"/></g></svg></div><div class="dot"></div><div class="n">谢菲旅游，接机&amp;送...</div><div class="tm">15:17</div><div class="p">[8条] A思源西安地接13号...</div><svg class="mu" viewBox="0 0 11 12"><path d="M5.500 1c-2 0-3 1.500-3 4v2.500L1 10h9L8.500 7.500V5c0-2.500-1-4-3-4zM1 1l9 10" fill="#c4c4c4" stroke="#c4c4c4" stroke-width=".800"/></svg></div>

  <div class="it" style="top:162px"><div class="av" style="background:#fff;border-radius:5px"><svg width="40" height="40" viewBox="0 0 40 40"><path d="M14 6l18 10-6 4-12-7z" fill="#2aa8e8"/><path d="M32 18l-18 12v-6l12-8z" fill="#46c43c"/><path d="M8 12l6-4v24l-6-4z" fill="#f5b623"/></svg></div><div class="dot"></div><div class="n">微信游戏</div><div class="tm">15:15</div><div class="p">[94条] 酷跑人直面天命，...</div><svg class="mu" viewBox="0 0 11 12"><path d="M5.500 1c-2 0-3 1.500-3 4v2.500L1 10h9L8.500 7.500V5c0-2.500-1-4-3-4zM1 1l9 10" fill="#c4c4c4" stroke="#c4c4c4" stroke-width=".800"/></svg></div>

  <div class="it" style="top:226px"><div class="av" style="background:#fff;border-radius:5px"><svg width="40" height="40" viewBox="0 0 40 40"><circle cx="20" cy="20" r="14" fill="none" stroke="#2ec48a" stroke-width="4"/><path d="M8 27a14 14 0 0 0 12 7" fill="none" stroke="#e8304a" stroke-width="4"/><path d="M20 10c4 3 6 8 4 16h-9c-2-8 1-13 5-16z" fill="#1b6fd8"/></svg></div><div class="n">腾讯新闻</div><div class="tm">15:03</div><div class="p">大妈在胖东来霸占整车果汁...</div></div>

  <div class="it" style="top:290px"><div class="av" style="background:#1cc15e"><svg width="40" height="40" viewBox="0 0 40 40"><path d="M8 12h18v6l6-3v12l-6-3v6H8z" fill="#fff"/><path d="M22 16l6 4-6 4z" fill="#1cc15e"/></svg></div><div class="n">文件传输助手</div><div class="tm">24/11/1</div><div class="p">[文件]</div></div>

  <div class="it" style="top:354px"><div class="av" style="background:#1cc15e"><svg width="40" height="40" viewBox="0 0 40 40"><ellipse cx="20" cy="19" rx="13" ry="10" fill="#fff"/><path d="M11 26l-1 6 6-3z" fill="#fff"/><path d="M13 21l5 2 10-8" fill="none" stroke="#1cc15e" stroke-width="2.500"/></svg></div><div class="n">微信支付</div><div class="tm">15:03</div><div class="p"><span style="color:#e24b43">[服务通知]</span>已支付¥2.88</div></div>

  <div class="it" style="top:418px"><div class="av" style="background:#d9c9b4"><svg width="40" height="40" viewBox="0 0 40 40"><rect width="40" height="40" fill="#e6dccb"/><path d="M8 0h24v22H8z" fill="#d9b89a"/><path d="M6 0c8 4 20 4 28 0v10H6z" fill="#7a6a58"/><path d="M4 40c0-12 6-18 16-18s16 6 16 18z" fill="#3b3a44"/><rect x="26" y="6" width="8" height="7" fill="#e8e06a"/></svg></div><div class="n">芊诺</div><div class="tm">14:58</div><div class="p">那我以后再买别的还怎么卖<svg width="15" height="15" viewBox="0 0 15 15" style="vertical-align:-3px"><circle cx="7.500" cy="7.500" r="7" fill="#f8c332"/><path d="M3 6c1-1 2-1 3 0M9 6c1-1 2-1 3 0" stroke="#7a4a10" fill="none"/><path d="M4 9c2 3 5 3 7 0z" fill="#7a4a10"/><path d="M1 7c0 3 1 5 3 5" stroke="#4aa8f0" stroke-width="2" fill="none"/></svg></div></div>

  <div class="it" style="top:482px"><div class="av" style="background:#e8e8ea"><svg width="40" height="40" viewBox="0 0 40 40"><rect x="1" y="1" width="18" height="18" fill="#c8ccd2"/><rect x="21" y="1" width="18" height="18" fill="#f4f4f6"/><rect x="1" y="21" width="18" height="18" fill="#4a4a52"/><rect x="21" y="21" width="18" height="18" fill="#9a8a80"/></svg></div><div class="dot"></div><div class="n">曼大新生交流群</div><div class="tm">14:55</div></div>
 </div>

 <!-- chat panel -->
 <div class="a" style="left:328px;top:18px;font-size:18px;line-height:26px;color:#111;white-space:nowrap">大强网课[招代理包教学]</div>
 <div class="a" style="left:305px;top:61px;width:340px;height:1px;background:#e6e6e6"></div>
 <div class="msg" style="top:66px"><svg width="34" height="34" viewBox="0 0 34 34"><path d="M2 12l11 4 8-10 1 9 10 9-11-2-3 6-3-6-9-2 5-2z" fill="#c9d5dd"/><path d="M13 16l8 2 7 7-11-3z" fill="#34445a"/><path d="M21 6l-3 14" stroke="#eef2f5" stroke-width="2"/></svg></div>
 <div class="bub" style="top:65px">没</div>
 <div class="tl" style="top:119px">11:13</div>
 <div class="msg" style="top:150px"><svg width="34" height="34" viewBox="0 0 34 34"><path d="M2 12l11 4 8-10 1 9 10 9-11-2-3 6-3-6-9-2 5-2z" fill="#c9d5dd"/><path d="M13 16l8 2 7 7-11-3z" fill="#34445a"/><path d="M21 6l-3 14" stroke="#eef2f5" stroke-width="2"/></svg></div>
 <div class="bub" style="top:149px;background:#ebebeb;font-size:15px">账号aallbuj2cy2</div>
 <div class="msg" style="top:200px"><svg width="34" height="34" viewBox="0 0 34 34"><path d="M2 12l11 4 8-10 1 9 10 9-11-2-3 6-3-6-9-2 5-2z" fill="#c9d5dd"/><path d="M13 16l8 2 7 7-11-3z" fill="#34445a"/><path d="M21 6l-3 14" stroke="#eef2f5" stroke-width="2"/></svg></div>
 <div class="bub" style="top:199px;font-size:15px">密码123456</div>
 <div class="msg" style="top:250px"><svg width="34" height="34" viewBox="0 0 34 34"><path d="M2 12l11 4 8-10 1 9 10 9-11-2-3 6-3-6-9-2 5-2z" fill="#c9d5dd"/><path d="M13 16l8 2 7 7-11-3z" fill="#34445a"/><path d="M21 6l-3 14" stroke="#eef2f5" stroke-width="2"/></svg></div>
 <div class="bub" style="top:249px;width:84px;font-size:13px"><svg width="12" height="14" viewBox="0 0 12 14" style="position:absolute;left:14px;top:11px"><circle cx="2" cy="7" r="1.300" fill="#222"/><path d="M5 4c1.500 2 1.500 4 0 6M8 2c2.500 3 2.500 7 0 10" fill="none" stroke="#222" stroke-width="1.300"/></svg><span style="position:absolute;left:37px">4"</span></div>
 <div class="tl" style="top:305px">12:45</div>
 <div class="msg" style="top:336px"><svg width="34" height="34" viewBox="0 0 34 34"><path d="M2 12l11 4 8-10 1 9 10 9-11-2-3 6-3-6-9-2 5-2z" fill="#c9d5dd"/><path d="M13 16l8 2 7 7-11-3z" fill="#34445a"/><path d="M21 6l-3 14" stroke="#eef2f5" stroke-width="2"/></svg></div>
 <div class="bub" style="top:335px;width:163px"><svg width="22" height="12" viewBox="0 0 22 12" style="position:absolute;left:9px;top:13px"><path d="M2 8c0-3 4-5.500 9-5.500S20 5 20 8l-1.500 1.500-3.500-1.500V6c-2.500-1-5.500-1-8 0v2L3.500 9.500z" fill="none" stroke="#222" stroke-width="1.300"/></svg><span style="position:absolute;left:42px;font-size:13.500px">已在其它设备接听</span></div>
 <div class="a" style="left:305px;top:384px;width:340px;height:1px;background:#e9e9e9"></div>
 <svg class="a" style="left:328px;top:396px" width="125" height="22" viewBox="0 0 125 22"><g fill="none" stroke="#5a5a5a" stroke-width="1.300"><circle cx="10" cy="11" r="7.500"/><circle cx="7.500" cy="9" r=".600" fill="#5a5a5a"/><circle cx="12.500" cy="9" r=".600" fill="#5a5a5a"/><path d="M6 12.500c1.500 3 6.500 3 8 0z"/><path d="M35.500 17.500v-13h5.500l1.500 2h8.500v11zM35.500 9.500h15.500"/><path d="M71 4l7 10M79 4l-7 10"/><circle cx="70.500" cy="16" r="2.200"/><circle cx="79.500" cy="16" r="2.200"/><path d="M83 11h3"/><path d="M107.500 3.500a7.500 7 0 1 1-3 13.400l-3.500 1.600 1-3.500a7.500 7 0 0 1 5.500-11.500z"/><circle cx="104.500" cy="10.500" r=".500" fill="#5a5a5a"/><circle cx="107.500" cy="10.500" r=".500" fill="#5a5a5a"/><circle cx="110.500" cy="10.500" r=".500" fill="#5a5a5a"/></g></svg>
</div>
<style>
#dg{position:absolute;left:728px;top:334px;width:464px;height:354px;background:#000;overflow:hidden}
#dg .wood{position:absolute;left:0;top:0;width:464px;height:354px;background:repeating-linear-gradient(90deg,#242424 0,#242424 1.5px,#5e5e5e 1.5px,#565656 10px,#616161 20.5px,#2a2a2a 20.5px,#2a2a2a 22px,#525252 22px,#5c5c5c 32px,#4e4e4e 41px)}
#dg .wood2{position:absolute;left:0;top:0;width:464px;height:354px;background:repeating-linear-gradient(90deg,rgba(0,0,0,.10) 0,rgba(255,255,255,.04) 3px,rgba(0,0,0,.08) 5px,rgba(255,255,255,.03) 8px,rgba(0,0,0,.07) 11px),repeating-linear-gradient(90deg,rgba(0,0,0,0) 0,rgba(0,0,0,.12) 61.5px,rgba(0,0,0,0) 123px)}
#dg .vig{position:absolute;left:0;top:0;width:464px;height:354px;background:linear-gradient(90deg,#000 0,rgba(0,0,0,.72) 5%,rgba(0,0,0,.3) 14%,rgba(0,0,0,0) 27%,rgba(0,0,0,0) 73%,rgba(0,0,0,.3) 86%,rgba(0,0,0,.72) 95%,#000 100%),linear-gradient(180deg,#000 0,rgba(0,0,0,.75) 6%,rgba(0,0,0,.3) 16%,rgba(0,0,0,0) 30%,rgba(0,0,0,0) 70%,rgba(0,0,0,.3) 84%,rgba(0,0,0,.75) 94%,#000 100%),radial-gradient(ellipse 330px 255px at 50% 50%,rgba(0,0,0,0) 0,rgba(0,0,0,.05) 45%,rgba(0,0,0,.45) 80%,rgba(0,0,0,.85) 100%)}
#dg .a{position:absolute}
#dg .inp{position:absolute;left:124px;width:222px;height:21px;background:#04060f;border:1px solid #0d1233;color:#fff;white-space:nowrap}
#dg .btn{position:absolute;top:169px;width:76px;height:40px;text-align:center;line-height:40px;font-size:12px;font-weight:bold;color:#e6e6e6;
 background:linear-gradient(180deg,#394a63 0,#26374f 48%,#13233b 52%,#1a2f4c 100%);box-shadow:0 0 4px rgba(20,36,64,.9);text-shadow:0 1px 1px #000}
</style>
<div id="dg">
 <div class="wood"></div><div class="wood2"></div><div class="vig"></div>
 <div class="a" style="left:84px;top:84px;font-size:12px;line-height:18px;color:#fff;white-space:nowrap">用户名</div>
 <div class="inp" style="top:82px"><span style="position:absolute;left:1px;top:0;font-size:15px;line-height:19px">aallbuj2cy2</span></div>
 <div class="a" style="left:96px;top:125px;font-size:12px;line-height:18px;color:#fff;white-space:nowrap">密码</div>
 <div class="inp" style="top:124px"><span id="pw" style="position:absolute;left:1px;top:0;font-size:11.3px;line-height:19px;letter-spacing:0">●●●●●●</span></div>
 <div class="btn" style="left:127px">播放</div>
 <div class="btn" style="left:268px">关闭</div>
</div>
<div id="bd" style="position:absolute;left:1630px;top:112px;width:110px;height:37px;border-radius:6px;background:#eef6ff;overflow:hidden">
 <div style="position:absolute;left:0;top:0;width:37px;height:37px;border-radius:6px;background:linear-gradient(135deg,#3aa8ff,#0d84f5)"></div>
 <svg style="position:absolute;left:8px;top:9px" width="22" height="18" viewBox="0 0 22 18"><g fill="none" stroke="#fff" stroke-width="2.600"><circle cx="11" cy="5.500" r="3.600"/><circle cx="5.500" cy="12" r="3.600"/><circle cx="16.500" cy="12" r="3.600"/></g></svg>
 <div style="position:absolute;left:45px;top:9px;font-size:13px;line-height:18px;font-weight:bold;color:#1a8cf0;white-space:nowrap">拖拽至此</div>
</div>
<style>
#tb .a{position:absolute}
#tb .task{position:absolute;top:0;height:40px;width:156px}
#tb .task i{position:absolute;left:0;bottom:0;width:100%;height:2px;background:#8cb9e6}
#tb .task span{position:absolute;left:34px;top:11px;font-size:12px;line-height:18px;color:#fff;white-space:nowrap}
#tb .task svg{position:absolute;left:8px;top:9px;width:22px;height:22px}
</style>
<div id="tb">
 <svg class="a" style="left:17px;top:12px" width="16" height="16" viewBox="0 0 16 16"><path d="M0 2.300l6.500-.900v6.100H0zM7.500 1.200L16 0v7.500H7.500zM0 8.500h6.500v6.100L0 13.700zM7.500 8.500H16V16l-8.500-1.200z" fill="#fff"/></svg>
 <svg class="a" style="left:60px;top:8px" width="24" height="24" viewBox="0 0 24 24"><circle cx="13.500" cy="9.500" r="7" fill="none" stroke="#fff" stroke-width="2"/><path d="M8.500 14.500L2 22" stroke="#fff" stroke-width="2.400"/></svg>
 <svg class="a" style="left:111px;top:8px" width="24" height="24" viewBox="0 0 48 48"><circle cx="24" cy="24" r="20.500" fill="#fff"/><circle cx="24" cy="24" r="18.500" fill="#5cba21"/><path d="M11 26c0-9 6-14 13.500-14 8 0 13 5 13 14h-19c.500 3.500 3 5.500 6.500 5.500 3 0 5-1 6.500-3l5.500 2.500c-2.500 4.500-7 6.500-12.500 6.500-8 0-13.500-5-13.500-11.500zm8-3.500h11c-.500-3-2.500-4.500-5.500-4.500s-5 1.500-5.500 4.500z" fill="#fff"/><path d="M6 40c-5-8 6-26 33-38-18 12-28 24-27 33z" fill="#6ac42a" stroke="#fff" stroke-width="1.200"/></svg>

 <div class="task" style="left:153px;background:#414347"><i></i><svg viewBox="0 0 48 48"><rect width="48" height="48" rx="11" fill="#f02a48"/><circle cx="24" cy="26" r="12.500" fill="none" stroke="#fff" stroke-width="3.600"/><circle cx="24.500" cy="26" r="5" fill="none" stroke="#fff" stroke-width="3.400"/><path d="M27 10c-4 1-4 5-3 8l2 8M26 11l5-2" fill="none" stroke="#fff" stroke-width="3.400" stroke-linecap="round"/></svg><span style="left:33px;letter-spacing:.25px">乌云的对白 - 王子明</span></div>
 <div class="task" style="left:309px;width:160px;background:#5c5e62"><i style="background:#a9cdf0"></i><svg viewBox="0 0 48 48" style="left:10px"><ellipse cx="18" cy="19" rx="17" ry="15" fill="#27c64d"/><path d="M8 30l-2 7 8-4z" fill="#27c64d"/><ellipse cx="33.500" cy="31" rx="13" ry="11" fill="#e9e9e9"/><path d="M40 40l3 5-7-3z" fill="#e9e9e9"/></svg><span style="left:38px">微信</span></div>
 <div class="task" style="left:472px"><i></i><svg viewBox="0 0 24 24" style="left:7px"><path d="M6 3h14l-4 17H2z" fill="#a9d6ea" stroke="#5f8ea6" stroke-width="1"/><path d="M7 7h10M6.300 10h10M5.600 13h10M4.900 16h10" stroke="#6f9cb5" stroke-width="1"/><path d="M6 3h14l-.500 2H5.500z" fill="#e6f2f8"/></svg><span style="left:36px;letter-spacing:-.1px">*新建文本文档.txt -...</span></div>
 <div class="task" style="left:632px"><i></i><svg viewBox="0 0 24 24" style="left:9px"><path d="M5 2h13l2 2v17H5z" fill="#f3d675"/><path d="M5 2l4 2v19l-4-2z" fill="#f9e6a4"/></svg><span style="left:37px;font-size:13px;letter-spacing:.4px">bofangqi</span></div>
 <div class="task" style="left:795px"><i></i><svg viewBox="0 0 24 24" style="left:7px"><circle cx="12" cy="12" r="11" fill="#111"/><circle cx="12" cy="12" r="9.800" fill="#fff"/><circle cx="12" cy="12" r="8.600" fill="#111"/><circle cx="12" cy="12" r="6" fill="#e8222c"/></svg><span style="left:35px;font-size:13px;letter-spacing:.1px">Bandicam 2025</span></div>
 <div class="task" style="left:955px"><i></i><svg viewBox="0 0 16 16" style="left:7px"><path d="M1 0l15 8L1 16z" fill="#1ba1ea"/><path d="M1 8h6c0 3-2 6-6 8z" fill="#0d6fe0"/><path d="M1 0c4 2 6 5 6 8H1z" fill="#12c0d8"/></svg><span style="left:36px">提示：方向键前进...</span></div>

 <!-- tray -->
 <svg class="a" style="left:1492px;top:11px" width="18" height="18" viewBox="0 0 24 24"><circle cx="12" cy="12" r="11" fill="#111"/><circle cx="12" cy="12" r="9.800" fill="#fff"/><circle cx="12" cy="12" r="8.400" fill="#111"/><circle cx="12" cy="12" r="5.500" fill="#e8222c"/></svg>
 <svg class="a" style="left:1517px;top:11px" width="17" height="17" viewBox="0 0 17 17"><rect width="17" height="17" rx="3" fill="#fff"/><g fill="none" stroke-width="1.600"><circle cx="8.500" cy="6" r="2.600" stroke="#f2415a"/><circle cx="5" cy="10.500" r="2.600" stroke="#2aa4f4"/><circle cx="12" cy="10.500" r="2.600" stroke="#2aa4f4"/></g></svg>
 <svg class="a" style="left:1541px;top:12px" width="16" height="16" viewBox="0 0 16 16"><rect width="16" height="16" fill="#1d1d1d"/><path d="M3 8c1.500-2.500 3.500-3.500 6-3.500v1.500c-1.500 0-3 .700-4 2 1 1.300 2.500 2 4 2v1.500c-2.500 0-4.500-1-6-3.500z" fill="#76b900"/><path d="M8 4.500h5v7H8" fill="none" stroke="#76b900" stroke-width="1.200"/></svg>
 <svg class="a" style="left:1563px;top:11px" width="20" height="18" viewBox="0 0 48 44"><ellipse cx="18" cy="17" rx="17" ry="14" fill="#27c64d"/><path d="M8 28l-2 7 8-4z" fill="#27c64d"/><ellipse cx="33.500" cy="29" rx="13" ry="11" fill="#e9e9e9"/><path d="M40 38l3 5-7-3z" fill="#e9e9e9"/></svg>
 <svg class="a" style="left:1589px;top:12px" width="16" height="16" viewBox="0 0 16 16"><rect width="16" height="16" fill="#0f7ad8"/><path d="M3 4h3v8H3M13 4h-3v8h3" fill="none" stroke="#fff" stroke-width="1.200"/><path d="M9 4L7 8h2l-2 4" fill="none" stroke="#ffe06a" stroke-width="1.200"/></svg>
 <svg class="a" style="left:1612px;top:10px" width="19" height="19" viewBox="0 0 19 19"><path d="M8.500 1l6.500 2v5c0 4-2.500 7-6.500 9C4.500 15 2 12 2 8V3z" fill="#fff" stroke="#222" stroke-width="1"/><path d="M8.500 1v16M2 8.500h13" stroke="#222" stroke-width="1"/><path d="M2 3l6.500-2v7.500H2z" fill="#222"/><path d="M8.500 8.500H15c0 4-2.500 6.500-6.500 8.500z" fill="#222"/><rect x="10" y="10" width="9" height="9" fill="#e8222c"/><path d="M12 12l5 5M17 12l-5 5" stroke="#fff" stroke-width="1.400"/></svg>
 <svg class="a" style="left:1636px;top:10px" width="20" height="20" viewBox="0 0 20 20"><rect x="1.500" y="2.500" width="15" height="11" fill="none" stroke="#fff" stroke-width="1.300"/><path d="M6 16h6M9 13.500V16" stroke="#fff" stroke-width="1.300"/><path d="M6 8a3 3 0 0 1 5-2M12 8a3 3 0 0 1-5 2" fill="none" stroke="#fff" stroke-width="1.100"/><circle cx="14.500" cy="14.500" r="3.800" fill="#f59a23"/></svg>
 <svg class="a" style="left:1660px;top:11px" width="18" height="18" viewBox="0 0 48 48"><rect width="48" height="48" rx="8" fill="#f02a48"/><circle cx="24" cy="26" r="12.500" fill="none" stroke="#fff" stroke-width="4"/><circle cx="24.500" cy="26" r="5" fill="none" stroke="#fff" stroke-width="3.600"/><path d="M27 10c-4 1-4 5-3 8l2 8M26 11l5-2" fill="none" stroke="#fff" stroke-width="3.600" stroke-linecap="round"/></svg>
 <svg class="a" style="left:1684px;top:11px" width="18" height="18" viewBox="0 0 18 18"><g fill="none" stroke="#fff" stroke-width="1.200"><rect x="4.500" y="3.500" width="12" height="9"/><path d="M7 16h8M11 12.500V16"/><rect x="1.500" y="1.500" width="4" height="5" fill="#363a40"/><path d="M3.500 6.500V11"/></g></svg>
 <svg class="a" style="left:1707px;top:11px" width="22" height="18" viewBox="0 0 22 18"><g fill="none" stroke="#fff" stroke-width="1.200"><path d="M1.500 6.500h3l4-3.500v12l-4-3.500h-3z"/><path d="M11 6.500c1 1.500 1 3.500 0 5M13.500 4.500c2 2.500 2 6.500 0 9M16 2.500c3 4 3 9 0 13"/></g></svg>
</div>
</body>
</html>
